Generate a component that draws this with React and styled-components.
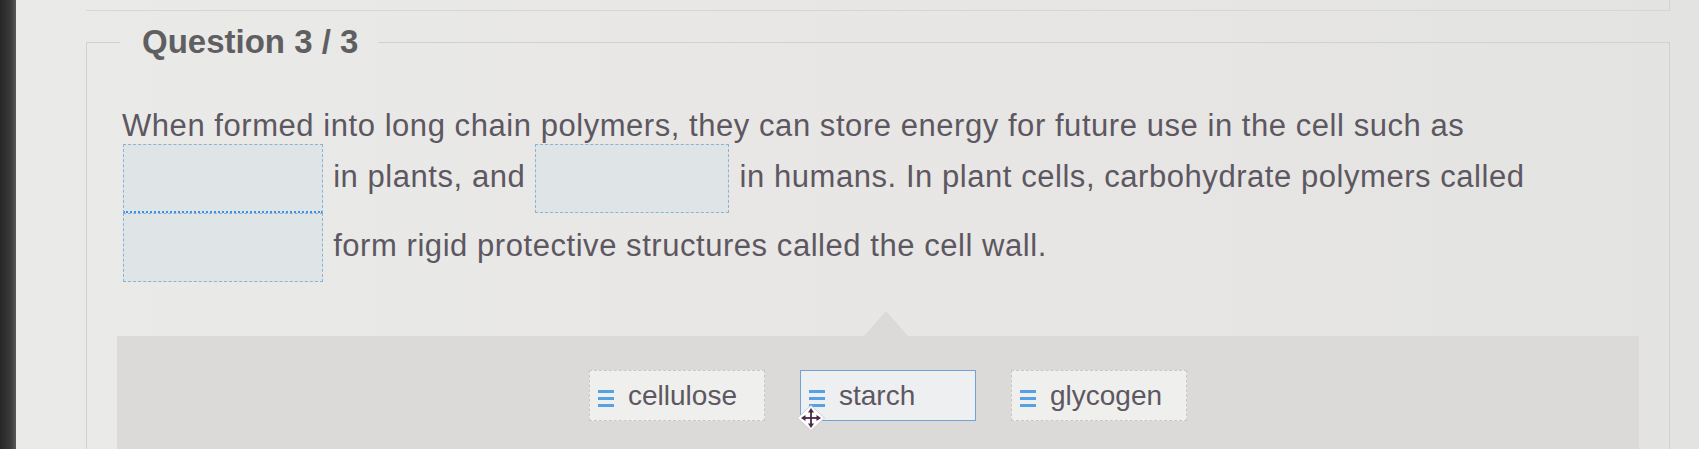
import React from 'react';
import styled, { createGlobalStyle } from 'styled-components';

const GlobalStyle = createGlobalStyle`
  html, body {
    margin: 0;
    padding: 0;
    background: #e8e7e5;
    overflow: hidden;
  }
  body {
    font-family: "Liberation Sans", Arial, sans-serif;
  }
`;

const Page = styled.div`
  display: flex;
  width: 1699px;
  height: 449px;
  overflow: hidden;
`;

const Bezel = styled.div`
  flex: 0 0 16px;
  background: linear-gradient(to right, #262626, #3c3c3c 70%, #5a5a58);
`;

const Screen = styled.div`
  flex: 1;
  padding: 0 29px 0 70px;
  background: linear-gradient(to right, #eaeae8, #e7e6e4 60%, #e3e3e1);
`;

const PrevCard = styled.div`
  height: 10px;
  border-right: 1px solid #d3d3d1;
  border-bottom: 1px solid #d6d6d4;
`;

const Fieldset = styled.fieldset`
  margin: 11px 0 0;
  padding: 0;
  min-width: 0;
  border: 1px solid #d1d1cf;
  border-bottom: none;
`;

const Legend = styled.legend`
  margin-left: 33px;
  padding: 0 20px 0 22px;
  font-size: 33px;
  line-height: 40px;
  font-weight: 700;
  color: #5f5f61;
`;

const Content = styled.div`
  padding: 46px 35px 0 35px;
`;

const Sentence = styled.div`
  font-size: 31px;
  line-height: 36px;
  color: #5d5761;
  letter-spacing: 0.55px;
  white-space: nowrap;
`;

const Blank = styled.span`
  display: inline-block;
  vertical-align: middle;
  box-sizing: border-box;
  width: ${p => p.$w || 200}px;
  height: 69px;
  margin: 0 1px;
  background: #dfe5e7;
  border: 1px dashed #86b3d8;
  ${p => p.$active && `border-bottom: 2px dotted #3e94dc;`}
`;

const DropPanel = styled.div`
  position: relative;
  margin: 54px -5px 0 -5px;
  min-height: 140px;
  background: #dbdad8;

  &::before {
    content: "";
    position: absolute;
    top: -25px;
    left: 747px;
    border-left: 22px solid transparent;
    border-right: 22px solid transparent;
    border-bottom: 25px solid #dbdad8;
  }
`;

const ChipRow = styled.div`
  display: flex;
  justify-content: center;
  gap: 35px;
  padding: 34px 0 0 20px;
`;

const Chip = styled.div`
  position: relative;
  display: flex;
  align-items: center;
  gap: 14px;
  box-sizing: border-box;
  width: 176px;
  height: 51px;
  padding-left: 8px;
  font-size: 28px;
  color: #5d5761;
  background: ${p => (p.$selected ? '#edeff0' : '#efefed')};
  border: ${p => (p.$selected ? '1.5px solid #72a3d6' : '1.5px dashed #c8c8c6')};
`;

const HandleIcon = styled.svg`
  flex: 0 0 auto;
  margin-top: 5px;
`;

const Cursor = styled.svg`
  position: absolute;
  left: -4px;
  top: 34px;
`;

const Handle = () => (
  <HandleIcon width="16" height="17" viewBox="0 0 16 17">
    <g stroke="#55a1e3" strokeWidth="3">
      <line x1="0" y1="1.5" x2="16" y2="1.5" />
      <line x1="0" y1="8.5" x2="16" y2="8.5" />
      <line x1="0" y1="15.5" x2="16" y2="15.5" />
    </g>
  </HandleIcon>
);

const MoveCursor = () => (
  <Cursor width="28" height="26" viewBox="0 0 28 26">
    <polygon points="14,0.5 27.5,13 14,25.5 0.5,13" fill="#ffffff" stroke="#cfcfcf" strokeWidth="1" />
    <g fill="#4a2848">
      <rect x="13.1" y="5" width="1.8" height="16" />
      <rect x="6" y="12.1" width="16" height="1.8" />
      <polygon points="14,3 17,7.5 11,7.5" />
      <polygon points="14,23 17,18.5 11,18.5" />
      <polygon points="4,13 8.5,10 8.5,16" />
      <polygon points="24,13 19.5,10 19.5,16" />
    </g>
  </Cursor>
);

const choices = [
  { label: 'cellulose' },
  { label: 'starch', selected: true },
  { label: 'glycogen' },
];

export default function App() {
  return (
    <>
      <GlobalStyle />
      <Page>
        <Bezel />
        <Screen>
          <PrevCard />
          <Fieldset>
            <Legend>Question 3 / 3</Legend>
            <Content>
              <Sentence>
                When formed into long chain polymers, they can store energy for future use in the cell such as
                <br />
                <Blank $active /> in plants, and <Blank $w={194} /> in humans. In plant cells, carbohydrate
                polymers called
                <br />
                <Blank /> form rigid protective structures called the cell wall.
              </Sentence>
              <DropPanel>
                <ChipRow>
                  {choices.map(c => (
                    <Chip key={c.label} $selected={c.selected}>
                      <Handle />
                      <span>{c.label}</span>
                      {c.selected && <MoveCursor />}
                    </Chip>
                  ))}
                </ChipRow>
              </DropPanel>
            </Content>
          </Fieldset>
        </Screen>
      </Page>
    </>
  );
}
